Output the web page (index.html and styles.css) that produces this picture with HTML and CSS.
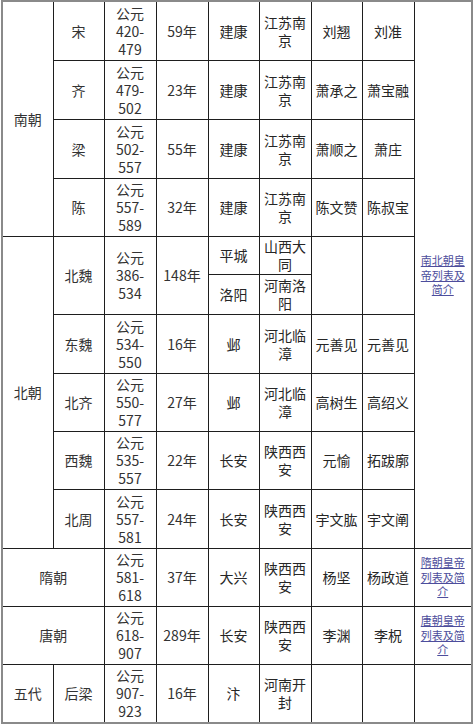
FILE: index.html
```html
<!DOCTYPE html>
<html lang="zh">
<head>
<meta charset="utf-8">
<title>南北朝</title>
<link rel="stylesheet" href="styles.css">
</head>
<body>
<table class="dyn">
  <colgroup>
    <col class="c1"><col class="c2"><col class="c3"><col class="c4"><col class="c5"><col class="c6"><col class="c7"><col class="c8"><col class="c9">
  </colgroup>
  <tbody>
    <tr class="h59">
      <td rowspan="4" class="sans">南朝</td>
      <td class="sans">宋</td>
      <td class="sans">公元<br>420-<br>479</td>
      <td class="sans">59年</td>
      <td>建康</td>
      <td>江苏南<br>京</td>
      <td>刘翘</td>
      <td>刘准</td>
      <td rowspan="10" class="link-cell"><a href="#nbc">南北朝皇帝列表及简介</a></td>
    </tr>
    <tr class="h59">
      <td class="sans">齐</td>
      <td class="sans">公元<br>479-<br>502</td>
      <td class="sans">23年</td>
      <td>建康</td>
      <td>江苏南<br>京</td>
      <td>萧承之</td>
      <td>萧宝融</td>
    </tr>
    <tr class="h59">
      <td class="sans">梁</td>
      <td class="sans">公元<br>502-<br>557</td>
      <td class="sans">55年</td>
      <td>建康</td>
      <td>江苏南<br>京</td>
      <td>萧顺之</td>
      <td>萧庄</td>
    </tr>
    <tr class="h58">
      <td class="sans">陈</td>
      <td class="sans">公元<br>557-<br>589</td>
      <td class="sans">32年</td>
      <td>建康</td>
      <td>江苏南<br>京</td>
      <td>陈文赞</td>
      <td>陈叔宝</td>
    </tr>
    <tr class="h38">
      <td rowspan="6" class="sans">北朝</td>
      <td rowspan="2" class="sans">北魏</td>
      <td rowspan="2" class="sans">公元<br>386-<br>534</td>
      <td rowspan="2" class="sans">148年</td>
      <td>平城</td>
      <td>山西大<br>同</td>
      <td rowspan="2"></td>
      <td rowspan="2"></td>
    </tr>
    <tr class="h40">
      <td>洛阳</td>
      <td>河南洛<br>阳</td>
    </tr>
    <tr class="h59">
      <td class="sans">东魏</td>
      <td class="sans">公元<br>534-<br>550</td>
      <td class="sans">16年</td>
      <td>邺</td>
      <td>河北临<br>漳</td>
      <td>元善见</td>
      <td>元善见</td>
    </tr>
    <tr class="h58">
      <td class="sans">北齐</td>
      <td class="sans">公元<br>550-<br>577</td>
      <td class="sans">27年</td>
      <td>邺</td>
      <td>河北临<br>漳</td>
      <td>高树生</td>
      <td>高绍义</td>
    </tr>
    <tr class="h58">
      <td class="sans">西魏</td>
      <td class="sans">公元<br>535-<br>557</td>
      <td class="sans">22年</td>
      <td>长安</td>
      <td>陕西西<br>安</td>
      <td>元愉</td>
      <td>拓跋廓</td>
    </tr>
    <tr class="h59">
      <td class="sans">北周</td>
      <td class="sans">公元<br>557-<br>581</td>
      <td class="sans">24年</td>
      <td>长安</td>
      <td>陕西西<br>安</td>
      <td>宇文肱</td>
      <td>宇文阐</td>
    </tr>
    <tr class="h58">
      <td colspan="2" class="sans">隋朝</td>
      <td class="sans">公元<br>581-<br>618</td>
      <td class="sans">37年</td>
      <td>大兴</td>
      <td>陕西西<br>安</td>
      <td>杨坚</td>
      <td>杨政道</td>
      <td class="link-cell"><a href="#sui">隋朝皇帝列表及简介</a></td>
    </tr>
    <tr class="h58">
      <td colspan="2" class="sans">唐朝</td>
      <td class="sans">公元<br>618-<br>907</td>
      <td class="sans">289年</td>
      <td>长安</td>
      <td>陕西西<br>安</td>
      <td>李渊</td>
      <td>李柷</td>
      <td class="link-cell"><a href="#tang">唐朝皇帝列表及简介</a></td>
    </tr>
    <tr class="h59">
      <td class="sans">五代</td>
      <td class="sans">后梁</td>
      <td class="sans">公元<br>907-<br>923</td>
      <td class="sans">16年</td>
      <td>汴</td>
      <td>河南开<br>封</td>
      <td></td>
      <td></td>
      <td></td>
    </tr>
  </tbody>
</table>
</body>
</html>
```

FILE: styles.css
```css
html, body {
  margin: 0;
  padding: 0;
  background: #ffffff;
}

.dyn {
  border-collapse: collapse;
  table-layout: fixed;
  width: 472px;
  margin-left: 1px;
  border: 2px solid #8a8a8a;
  font-family: "Noto Sans CJK SC", "Noto Sans", sans-serif;
  font-size: 14px;
  line-height: 18px;
  color: #262626;
}

.c1 { width: 51px; }
.c2 { width: 51px; }
.c3 { width: 52px; }
.c4 { width: 52px; }
.c5 { width: 51px; }
.c6 { width: 52px; }
.c7 { width: 51px; }
.c8 { width: 52px; }
.c9 { width: 58px; }

.dyn td {
  border: 1px solid #1e1e1e;
  padding: 0;
  text-align: center;
  vertical-align: middle;
  overflow: hidden;
}

.h59 { height: 59px; }
.h58 { height: 58px; }
.h38 { height: 38px; }
.h40 { height: 40px; }

.sans {
  color: #333333;
}

.link-cell {
  font-size: 11px;
  line-height: 14.5px;
  padding: 0 6px;
}

.dyn .link-cell {
  padding: 0 6px;
}

.link-cell a {
  color: #4d4d9c;
  text-decoration: underline;
  word-break: break-all;
}
```
